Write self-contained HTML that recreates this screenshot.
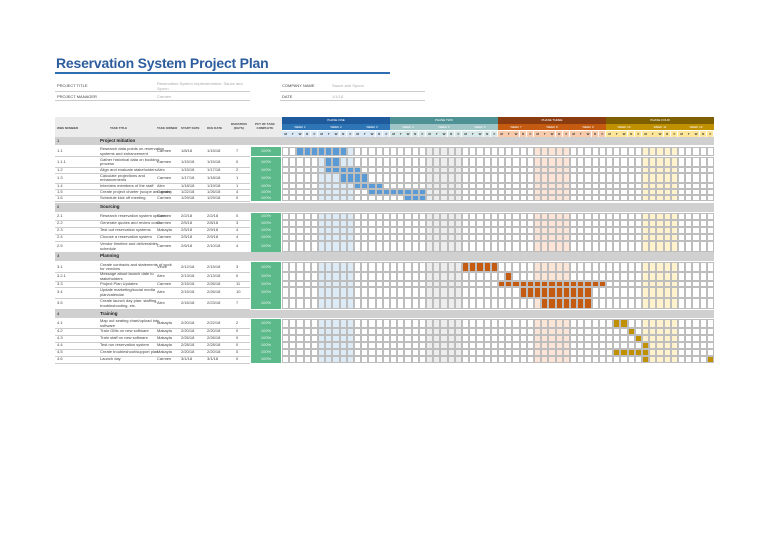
<!DOCTYPE html>
<html><head><meta charset="utf-8"><style>
body{margin:0;width:768px;height:543px;background:#fff;position:relative;overflow:hidden;font-family:"Liberation Sans",sans-serif;}
div{position:absolute;box-sizing:border-box}
.t{font-size:4px;color:#444;white-space:nowrap;line-height:4.5px}
.g{color:#aaa}
.b{font-weight:bold}
</style></head><body>
<div style="left:56px;top:55px;font-size:14px;font-weight:bold;color:#2e5d9e;letter-spacing:-0.2px">Reservation System Project Plan</div>
<div style="left:55px;top:72px;width:335px;height:2px;background:#2e6fb3"></div>
<div class="t" style="left:57px;top:84px">PROJECT TITLE</div>
<div class="t g" style="left:157px;top:82px">Reservation System Implementation: Sauce and<br>Spoon</div>
<div style="left:55px;top:91px;width:195px;height:1px;background:#ccc"></div>
<div class="t" style="left:57px;top:95px">PROJECT MANAGER</div>
<div class="t g" style="left:157px;top:95px">Carmen</div>
<div style="left:55px;top:100px;width:195px;height:1px;background:#ccc"></div>
<div class="t" style="left:282px;top:84px">COMPANY NAME</div>
<div class="t g" style="left:332px;top:84px">Sauce and Spoon</div>
<div style="left:280px;top:91px;width:145px;height:1px;background:#ccc"></div>
<div class="t" style="left:282px;top:95px">DATE</div>
<div class="t g" style="left:332px;top:95px">1/1/18</div>
<div style="left:280px;top:100px;width:145px;height:1px;background:#ccc"></div>
<div style="left:55px;top:117px;width:227px;height:20px;background:#ececec"></div>
<div id="root"></div>
<script>
var R=document.getElementById('root'),h='';
function d(x,y,w,hh,bg,extra){h+='<div style="left:'+x+'px;top:'+y+'px;width:'+w+'px;height:'+hh+'px;background:'+bg+';'+(extra||'')+'"></div>';}
function t(x,y,s,cls,extra){h+='<div class="t '+(cls||'')+'" style="left:'+x+'px;top:'+y+'px;'+(extra||'')+'">'+s+'</div>';}
// header labels
t(57,126,'WBS NUMBER','b','font-size:3px');t(110,126,'TASK TITLE','b','font-size:3px');
t(157,126,'TASK OWNER','b','font-size:3px');t(181,126,'START DATE','b','font-size:3px');
t(207,126,'DUE DATE','b','font-size:3px');
t(231,123,'DURATION<br>(DAYS)','b','font-size:3px;text-align:center;line-height:3.5px');
t(255,123,'PCT OF TASK<br>COMPLETE','b','font-size:3px;text-align:center;line-height:3.5px');
var X0=282,W=7.2;
var ph=[['PHASE ONE','#1f5b9c','#2e75b6','#dbe8f5','#ddebf7'],['PHASE TWO','#4f9295','#9fc5c7','#d9e8e9','#ededed'],['PHASE THREE','#8a3c10','#c55a11','#f8cbad','#fce4d6'],['PHASE FOUR','#7f6000','#bf9000','#ffe699','#fff2cc']];
var days=['M','T','W','R','F'];
for(var p=0;p<4;p++){var px=X0+p*15*W;d(px,117,15*W-0.5,6.5,ph[p][1]);
 h+='<div class="t" style="left:'+px+'px;top:118px;width:'+(15*W)+'px;text-align:center;color:#fff;font-size:3px">'+ph[p][0]+'</div>';
 for(var w=0;w<3;w++){var wx=px+w*5*W;d(wx,124,5*W-0.5,6,ph[p][2]);
  h+='<div class="t" style="left:'+wx+'px;top:125px;width:'+(5*W)+'px;text-align:center;color:#fff;font-size:3px">WEEK '+(p*3+w+1)+'</div>';
  for(var k=0;k<5;k++){var dx=wx+k*W;d(dx,131,W-0.7,6,ph[p][3]);
   h+='<div class="t b" style="left:'+dx+'px;top:132px;width:'+W+'px;text-align:center;font-size:3px;color:#333">'+days[k]+'</div>';}
 }}
var rows=[
[137,8,'s','1','Project Initiation'],
[147,9,'r','1.1','Research data points on reservation<br>systems and enhancement','Carmen','1/8/18','1/15/18','7',[2,3,4,5,6,7,8],'#5b9bd5'],
[157,10,'r','1.1.1','Gather historical data on booking<br>process','Carmen','1/15/18','1/15/18','0',[6,7],'#5b9bd5'],
[167,6,'r','1.2','Align and evaluate stakeholders','Alex','1/15/18','1/17/18','2',[6,7,8,9,10],'#5b9bd5'],
[173,10,'r','1.3','Calculate projections and<br>enhancements','Carmen','1/17/18','1/18/18','1',[8,9,10,11],'#5b9bd5'],
[183,6,'r','1.4','Interview members of the staff','Alex','1/18/18','1/19/18','1',[10,11,12,13],'#5b9bd5'],
[189,6,'r','1.5','Create project charter (scope and goals)','Carmen','1/22/18','1/26/18','4',[12,13,14,15,16,17,18,19],'#5b9bd5'],
[195,6,'r','1.6','Schedule kick off meeting','Carmen','1/29/18','1/29/18','0',[17,18,19],'#5b9bd5'],
[203,9,'s','2','Sourcing'],
[213,7,'r','2.1','Research reservation system options','Carmen','2/2/18','2/2/18','0',[]],
[220,7,'r','2.2','Generate quotes and review costs','Carmen','2/5/18','2/8/18','3',[]],
[227,7,'r','2.3','Test out reservation systems','Makayla','2/5/18','2/9/18','4',[]],
[234,7,'r','2.4','Choose a reservation system','Carmen','2/5/18','2/9/18','4',[]],
[241,11,'r','2.5','Vendor timeline and deliverables<br>schedule','Carmen','2/6/18','2/10/18','4',[],'',1],
[252,9,'s','3','Planning'],
[262,10,'r','3.1','Create contracts and statements of work<br>for vendors','Vince','2/12/18','2/15/18','3',[25,26,27,28,29],'#c55a11'],
[272,9,'r','3.2.1','Message about launch date to<br>stakeholders','Alex','2/13/18','2/13/18','0',[31],'#c55a11'],
[281,6,'r','3.3','Project Plan Updates','Carmen','2/15/18','2/26/18','11',[30,31,32,33,34,35,36,37,38,39,40,41,42,43,44],'#c55a11'],
[287,11,'r','3.4','Update marketing/social media<br>plan/calendar','Alex','2/15/18','2/26/18','10',[33,34,35,36,37,38,39,40,41,42],'#c55a11'],
[298,11,'r','3.5','Create launch day plan: staffing,<br>troubleshooting, etc.','Alex','2/16/18','2/23/18','7',[36,37,38,39,40,41,42],'#c55a11'],
[310,8,'s','4','Training'],
[319,9,'r','4.1','Map out seating chart/upload into<br>software','Makayla','2/20/18','2/22/18','2',[46,47],'#bf9000'],
[328,7,'r','4.2','Train GMs on new software','Makayla','2/20/18','2/20/18','0',[48],'#bf9000'],
[335,7,'r','4.3','Train staff on new software','Makayla','2/26/18','2/26/18','0',[49],'#bf9000'],
[342,7,'r','4.4','Test run reservation system','Makayla','2/28/18','2/28/18','0',[50],'#bf9000'],
[349,7,'r','4.5','Create troubleshoot/support plan','Makayla','2/20/18','2/20/18','0',[46,47,48,49,50],'#bf9000'],
[356,7,'r','4.6','Launch day','Carmen','3/1/18','3/1/18','0',[50,59],'#bf9000']
];
rows.forEach(function(r){var y=r[0],hh=r[1];
 if(r[2]=='s'){d(55,y,X0+60*W-55,hh,'#d0d0d0');t(57,y+2,r[3],'b');t(100,y+2,r[4],'b','font-size:4.5px;color:#222');return;}
 var ty=y+hh/2-(r[4].indexOf('<br>')>=0?4.5:2.2);
 if(r[12])d(99,y,57,hh,'#c6efce');
 t(57,y+hh/2-2.2,r[3]);t(100,ty,r[4]);t(157,y+hh/2-2.2,r[5]);t(181,y+hh/2-2.2,r[6]);t(207,y+hh/2-2.2,r[7]);t(236,y+hh/2-2.2,r[8]);
 d(55,y+hh-0.5,195,0.6,'#ccc');
 d(251,y+0.3,30,hh-0.6,'#5bb98a');
 h+='<div class="t" style="left:251px;top:'+(y+hh/2-2.2)+'px;width:30px;text-align:center;color:#e8f5ee">100%</div>';
 var bars=r[9];
 for(var i=0;i<60;i++){var wk=Math.floor(i/5),bg='#fff';
  if(wk==1)bg='#ddebf7';if(wk==4)bg='#ededed';if(wk==7)bg='#fce4d6';if(wk==10)bg='#fff2cc';
  if(bars.indexOf(i)>=0)bg=r[10];
  d(X0+i*W,y,W,hh,bg,'border:0.7px solid #bdbdbd');}
});
R.innerHTML=h;
</script>
</body></html>
